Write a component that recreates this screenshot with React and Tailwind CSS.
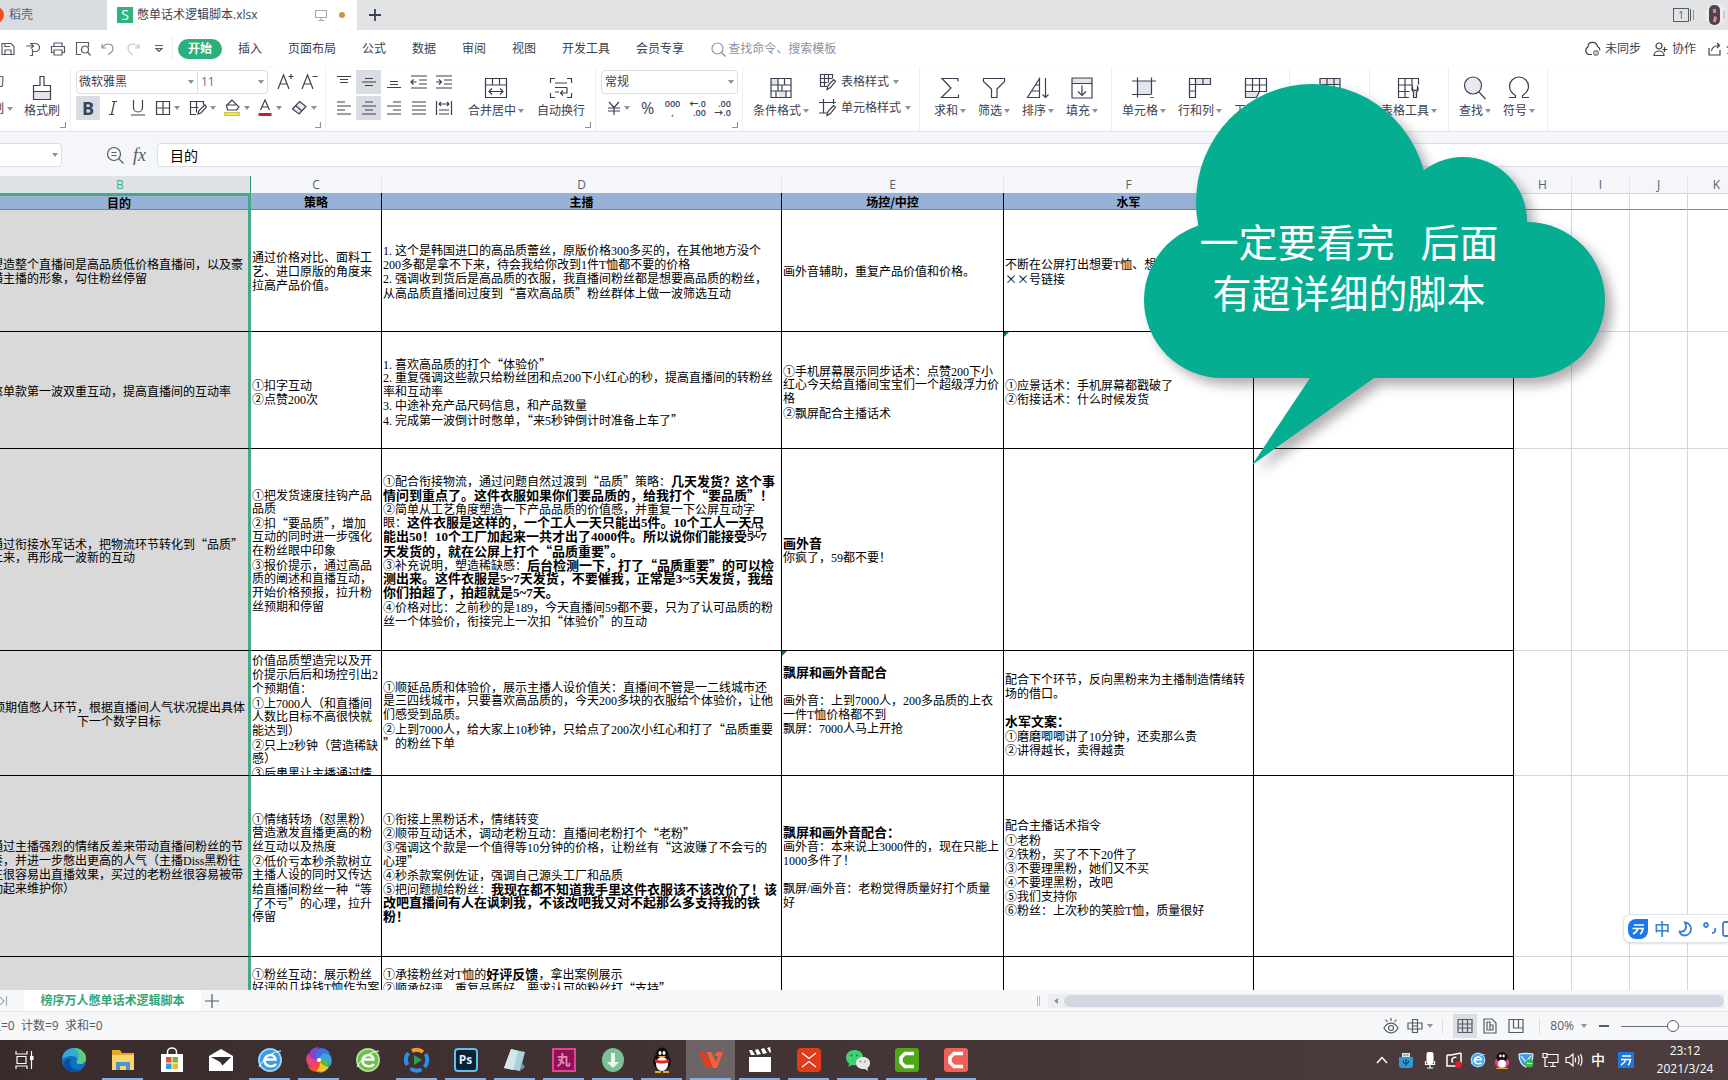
// src/App.jsx
import React from 'react';

const UI_FONT = "font-['Open_Sans','Noto_Sans_CJK_SC',sans-serif]";
const CJK_FONT = "font-['Noto_Sans_CJK_SC',sans-serif]";
const CELL_FONT = "font-['Liberation_Serif','Noto_Sans_CJK_SC',serif]";

/* ---------- small helpers ---------- */

const Svg = ({ w = 20, h, vb, className = '', children }) => (
  <svg
    width={w}
    height={h || w}
    viewBox={vb || `0 0 ${w} ${h || w}`}
    className={`shrink-0 ${className}`}
    fill="none"
    stroke="currentColor"
    strokeWidth="1.2"
    aria-hidden="true"
  >
    {children}
  </svg>
);

const Caret = () => (
  <svg width="6" height="4" viewBox="0 0 6 4" className="shrink-0 fill-[#8d929b]" aria-hidden="true">
    <path d="M0 0h6L3 4z" />
  </svg>
);

const Corner = () => (
  <Svg w={6} className="absolute right-1 bottom-[3px] text-[#8d929b]">
    <path d="M5.500 0v5.500H0" />
  </Svg>
);

// Full width quotes and circled numbers need the CJK face, digits the narrow one
const renderText = (text) =>
  text.split(/([“”①-⑥×]+)/).map((part, i) =>
    i % 2 ? <span key={i} className={CJK_FONT}>{part}</span> : part
  );

const Line = ({ text }) => (
  <div className="h-[14px] text-xs leading-[14px] whitespace-pre">
    {text.split('**').map((part, i) =>
      i % 2 ? (
        <b key={i} className="text-[13px] leading-[14px] font-bold">{renderText(part)}</b>
      ) : (
        <React.Fragment key={i}>{renderText(part)}</React.Fragment>
      )
    )}
  </div>
);

/* ---------- ribbon icons ---------- */

const icons = {
  save: <Svg w={16}><path d="M2 13.500v-11h9l3 3v8zM5 13.500V9h6v4.500M5 2.500v3h5" /></Svg>,
  exportPdf: <Svg w={16}><path d="M5 14.500h2.500v-4h3a4 4 0 0 0 0-8H5M1 5h7M6 2.500 8.500 5 6 7.500M7.500 10.500V8" /></Svg>,
  print: <Svg w={16}><path d="M4 5.500V2h8v3.500M4 11.500H1.500v-6h13v6H12M4 9h8v5H4z" /></Svg>,
  preview: <Svg w={16}><path d="M6 13.500H1.500v-12h12V6" /><circle cx="10" cy="8.500" r="3.500" /><path d="m12.500 11 3 3.500" /></Svg>,
  undo: <Svg w={16} className="text-[#8d929b]"><path d="M2 3v4h4M2.500 6.500C5 3 8 2.500 10.500 3.500c4 2 3 7.500-2.500 10" /></Svg>,
  redo: <Svg w={16} className="text-[#c5c8ce]"><path d="M14 3v4h-4M13.500 6.500C11 3 8 2.500 5.500 3.500c-4 2-3 7.500 2.500 10" /></Svg>,
  more: <Svg w={10}><path d="M1 1.500h8M2 4.500 5 7.500l3-3z" /></Svg>,
  brush: <Svg w={22} h={26}><path d="M9 1.500h4v9h6.500v6h-17v-6H9z" /><path d="M2.500 16.500h17v8h-17z" fill="#e3e4ec" /></Svg>,
  borders: <Svg w={16}><path d="M1.500 1.500h13v13h-13zM8 1.500v13M1.500 8h13" /></Svg>,
  cellStyle: <Svg w={18} h={16}><path d="M7 14.500H1.500v-13h13V5M1.500 7.500h8M7.500 1.500v11M9 14l1-3.500 6-5.500 1.500 2-5.500 6z" /></Svg>,
  fill: <Svg w={18} h={18}><path d="m9 1-5.500 5.500L4.500 11h9L16 8 9 1zM3 6h10" /><path d="M1.500 13.500h15v3h-15z" fill="#f4ea3c" stroke="#a8a23c" strokeWidth=".6" /></Svg>,
  fontColor: <Svg w={16} h={18}><path d="M3.500 11 8 1l4.500 10M5 8h6" /><path d="M1.500 14h13v3h-13z" fill="#c4202c" stroke="none" /></Svg>,
  eraser: <Svg w={18} h={16}><path d="m9.500 1.500 6.500 5-7 7.500-6.500-5z" fill="#e9eaf0" /><path d="m5.500 5.500 6.500 5.500" /></Svg>,
  alignTop: <Svg w={16}><path d="M1 2.500h14M4 5.500h8M4 8.500h8" /></Svg>,
  alignMid: <Svg w={16}><path d="M1 8h14M4 4.500h8M4 11.500h8" /></Svg>,
  alignBottom: <Svg w={16}><path d="M1 13.500h14M4 10.500h8M4 7.500h8" /></Svg>,
  outdent: <Svg w={18} h={16}><path d="M1 2h16M9 6h8M9 10h8M1 14h16M6.500 8H1M3.500 5.500 1 8l2.500 2.500" /></Svg>,
  indent: <Svg w={18} h={16}><path d="M1 2h16M9 6h8M9 10h8M1 14h16M1 8h5.500M4 5.500 6.500 8 4 10.500" /></Svg>,
  left: <Svg w={16}><path d="M1 2h8M1 6h14M1 10h8M1 14h14" /></Svg>,
  center: <Svg w={16}><path d="M4 2h8M1 6h14M4 10h8M1 14h14" /></Svg>,
  right: <Svg w={16}><path d="M7 2h8M1 6h14M7 10h8M1 14h14" /></Svg>,
  justify: <Svg w={16}><path d="M1 2h14M1 6h14M1 10h14M1 14h14" /></Svg>,
  distribute: <Svg w={18} h={16}><path d="M1.500 1v14M16.500 1v14M4 4h10M6 2 4 4l2 2M12 2l2 2-2 2M4 10h10M4 14h10" /></Svg>,
  merge: <Svg w={24}><path d="M1.500 2.500h21v19h-21zM1.500 9h21M8.500 2.500V9M15.500 2.500V9M5 15.500h14M8 12.500l-3 3 3 3M16 12.500l3 3-3 3" /></Svg>,
  wrap: <Svg w={24}><path d="M1.500 7V2.500H6M18 2.500h4.500V7M1.500 17v4.500H6M18 21.500h4.500V17M6 7h12M6 11.500h12M6 16h4M18 11.500V17h-6M14 14.500 11.500 17l2.500 2.500" /></Svg>,
  cond: <Svg w={24}><path d="M2 2.500h7.500V9H2zM9.500 15H18v6.500H9.500z" fill="#e3e4ec" stroke="none" /><path d="M2 2.500h20v19H2zM2 9h20M2 15h20M9 2.500V15M15.500 2.500V9M13 9v6M17 15v6.500M7 15v6.500" /></Svg>,
  tableStyle: <Svg w={18} h={18}><path d="M8 13.500H1.500v-12h12V5M1.500 5.500h12M1.500 9.500h7M5.500 1.500v12M9.500 1.500v8M8 16.500l1-4 5.500-6 2 1.500-5 6.500z" /></Svg>,
  boxStyle: <Svg w={18} h={18}><path d="M4.500 0v14M0 3.500h17M14.500 0v5M0 14h8M8 16.500l1-4 5.500-6 2 1.500-5 6.500z" /></Svg>,
  sum: <Svg w={24}><path d="M20 5.500v-3H4L13 12l-9.500 9.500H20.500v-3" /></Svg>,
  filter: <Svg w={24}><path d="M1.500 2.500h21v3L15 13v8.500H9.500V13l-8-7.500z" /></Svg>,
  sort: <Svg w={26} h={24}><path d="M14.500 21.500v-19L2.500 21.500zM14.500 15H7M14.500 9h-4M20.500 2v19.500M17.500 18.500l3 3 3-3" /></Svg>,
  fillDown: <Svg w={24}><path d="M2 2h20v6H2z" fill="#e3e4ec" stroke="none" /><path d="M2 2h20v20H2zM2 7.500h20M12 9.500v10M8 15.500l4 4 4-4" /></Svg>,
  cells: <Svg w={24}><path d="M5.500 5h14v13h-14z" fill="#e3e4ec" stroke="none" /><path d="M5.500 1.500v20M19.500 1.500v17M0 5h24M0 18.500h19M18.500 21.500h3" /></Svg>,
  rowscols: <Svg w={24}><path d="M7.500 2.500h15v6h-15z" fill="#e3e4ec" stroke="none" /><path d="M1.500 2.500h21v6h-21zM1.500 8.500v13h6v-19M15 2.500v6M1.500 15h6" /></Svg>,
  sheet: <Svg w={24}><path d="M1.500 15.500h14l-3 6h-11z" fill="#e3e4ec" stroke="none" /><path d="M1.500 2.500h21v13h-21zM1.500 9h21M8.500 2.500v13M15.500 2.500v13M1.500 15.500v6h11l3-6" /></Svg>,
  freeze: <Svg w={24}><path d="M2 2.500h20v6H2z" fill="#e3e4ec" stroke="none" /><path d="M2 2.500h20v19H2zM2 8.500h20M2 15h20M9 2.500v19M16 2.500v19" /></Svg>,
  tools: <Svg w={24}><path d="M12 21.500H1.500v-19h20v6M1.500 9H15M1.500 15.500h11M8 2.500v19M15 2.500v8" /><path d="M16.500 21.500V16a4 4 0 0 1-1-5.500v3l2.500 1 2.500-1v-3a4 4 0 0 1-1 5.500v5.500z" fill="#e3e4ec" /></Svg>,
  find: <Svg w={24} h={26}><circle cx="10" cy="10.500" r="8.500" fill="#e9eaf0" /><path d="m16 17 6.500 7" /></Svg>,
  omega: <Svg w={24}><path d="M2 21.500h6.500v-2C4.500 17 2.500 14 2.500 10.500a9.500 9.500 0 0 1 19 0c0 3.500-2 6.500-6 9v2H22" /></Svg>,
};

const IconButton = ({ label, icon, active, caret, className = 'w-[25px]' }) => (
  <button
    type="button"
    aria-label={label}
    className={`flex h-6 shrink-0 items-center justify-center gap-[3px] ${className} ${active ? 'bg-[#dadce3]' : ''}`}
  >
    {icon}
    {caret && <Caret />}
  </button>
);

const BigButton = ({ label, icon, caret = true, className = 'w-[44px]' }) => (
  <button type="button" className={`flex h-full shrink-0 flex-col items-center gap-[2px] pt-[7px] ${className}`}>
    <span className="flex h-[26px] items-center">{icons[icon]}</span>
    <span className="flex items-center gap-[2px] text-xs leading-4 whitespace-nowrap">
      {label}
      {caret && <Caret />}
    </span>
  </button>
);

const Group = ({ className, children }) => (
  <div className={`relative flex h-full shrink-0 border-r border-[#eeeff2] ${className}`}>{children}</div>
);

/* ---------- window header ---------- */

const TabBar = () => (
  <div className="flex h-[30px] items-stretch bg-[#e1e3e5] text-[#3b4150]">
    <button type="button" className="flex w-[107px] shrink-0 items-center gap-[5px] bg-[#d9dce0] text-xs text-[#5b606c]">
      <span className="-ml-3 h-4 w-4 shrink-0 rounded-full bg-[#f0501e]" />
      稻壳
    </button>
    <div className="flex w-[250px] shrink-0 items-center bg-white pl-[10px]">
      <span className="flex h-4 w-4 shrink-0 items-center justify-center bg-[#2fb480] text-sm leading-none text-white">S</span>
      <span className="ml-1 text-xs whitespace-nowrap">憋单话术逻辑脚本.xlsx</span>
      <Svg w={12} className="ml-auto text-[#a4a9b3]"><path d="M.500 1.500h11v7H.500zM6 8.500V11M3 11.500h6" /></Svg>
      <span className="mr-3 ml-3 h-[6px] w-[6px] rounded-full bg-[#c9983a]" />
    </div>
    <button type="button" aria-label="新建标签" className="flex w-9 items-center justify-center">
      <Svg w={12}><path d="M6 0v12M0 6h12" strokeWidth="1.800" /></Svg>
    </button>
    <div className="ml-auto flex items-center gap-[10px]">
      <span className="flex items-center gap-[1px] text-[#555b68]">
        <span className="flex h-[14px] w-4 items-center justify-center border border-[#555b68] text-[10px]">1</span>
        <span className="h-3 w-[1px] bg-[#555b68]" />
        <span className="ml-[1px] h-[10px] w-[1px] bg-[#8d929b]" />
      </span>
      <svg width="24" height="24" viewBox="0 0 24 24" aria-hidden="true">
        <circle cx="12" cy="12" r="11" fill="#eeebed" />
        <rect x="5" y="2" width="11" height="20" rx="5" fill="#55404f" />
        <path d="M9 6h3v4H9zM10 13l3 1-1 5H9z" fill="#c88f90" />
        <path d="M20 8v8" stroke="#b0a8ae" />
      </svg>
    </div>
  </div>
);

const MENUS = ['插入', '页面布局', '公式', '数据', '审阅', '视图', '开发工具', '会员专享'];

const MenuBar = () => (
  <div className="flex h-[38px] items-center bg-white text-xs text-[#3b4150]">
    <div className="flex items-center gap-[9px] text-[#555b68]">
      {[['保存', 'save'], ['输出', 'exportPdf'], ['打印', 'print'], ['打印预览', 'preview'], ['撤销', 'undo'], ['恢复', 'redo']].map(
        ([label, icon]) => (
          <button key={icon} type="button" aria-label={label}>{icons[icon]}</button>
        )
      )}
      <button type="button" aria-label="更多" className="ml-1">{icons.more}</button>
    </div>
    <div className="ml-2 h-6 w-[1px] bg-[#eeeff2]" />
    <nav className="flex items-center">
      <button type="button" className="ml-[5px] mr-[3px] h-5 w-11 rounded-full bg-[#2bb07c] font-bold text-white">开始</button>
      {MENUS.map((menu) => (
        <button key={menu} type="button" className="px-[13px] whitespace-nowrap">{menu}</button>
      ))}
    </nav>
    <label className="ml-[14px] flex items-center gap-[2px] text-[#8b93a6]">
      <Svg w={15}><circle cx="6.500" cy="6.500" r="5.500" /><path d="m10.500 10.500 4 4" /></Svg>
      <input
        type="text"
        aria-label="查找命令"
        placeholder="查找命令、搜索模板"
        className="w-40 bg-transparent outline-none placeholder:text-[#8b93a6]"
      />
    </label>
    <div className="-mr-[22px] ml-auto flex items-center gap-3">
      <button type="button" className="flex items-center gap-1">
        <Svg w={17} h={16}><path d="M8 13.500H5a4 4 0 0 1-1-7.500c0-6 8.500-6 9.500-.500 2 1 2.500 2.500 2.500 4" /><circle cx="12" cy="12" r="3" fill="#8d929b" stroke="none" /><path d="M10.500 12h3" stroke="#fff" /></Svg>
        未同步
      </button>
      <button type="button" className="flex items-center gap-1">
        <Svg w={15}><circle cx="6" cy="4" r="3" /><path d="M1 13.500c0-6 10-6 10 0zM11.500 5v5M9.500 7.500h5" /></Svg>
        协作
      </button>
      <button type="button" className="flex items-center gap-1">
        <Svg w={14}><path d="M1 6v7h11V8M3.500 9c.5-4 3-5.500 8-5.500M9 1l2.500 2.500L9 6" /></Svg>
        分享
      </button>
    </div>
  </div>
);

const Ribbon = () => (
  <div className="flex h-16 border-b border-[#dfe1e5] bg-white text-[#3b4150] shadow-sm">
    <Group className="w-[71px]">
      <div className="flex w-4 flex-col justify-between overflow-hidden pt-[6px] pb-[14px] text-xs leading-4">
        <span className="-ml-2">切</span>
        <span className="-ml-2 flex items-center gap-[3px]">制<Caret /></span>
      </div>
      <BigButton label="格式刷" icon="brush" caret={false} className="w-[52px]" />
      <Corner />
    </Group>

    <Group className="w-[255px]">
      <div className="flex flex-col gap-[2px] pt-[2px] pl-[5px]">
        <div className="flex h-6 items-center">
          <label className="relative flex h-6 w-[122px] items-center rounded-l-sm border border-[#dcdee3]">
            <select aria-label="字体" className="w-full appearance-none pl-[2px] text-xs outline-none">
              <option>微软雅黑</option>
            </select>
            <span className="pointer-events-none absolute right-[3px]"><Caret /></span>
          </label>
          <label className="relative flex h-6 w-[70px] items-center rounded-r-sm border border-l-0 border-[#dcdee3]">
            <select aria-label="字号" className="w-full appearance-none pl-[3px] text-xs text-[#6b7079] outline-none">
              <option>11</option>
            </select>
            <span className="pointer-events-none absolute right-[3px]"><Caret /></span>
          </label>
          <IconButton label="增大字号" className="ml-[5px] w-6" icon={<Svg w={17} h={18}><path d="M1 16 6.500 2 12 16M3 11h7M11.500 3.500h5M14 1v5" /></Svg>} />
          <IconButton label="减小字号" icon={<Svg w={17} h={18}><path d="M1 16 6.500 2 12 16M3 11h7M11.500 3.500h5" /></Svg>} />
        </div>
        <div className="flex h-6 items-center">
          <IconButton label="加粗" active className="w-6" icon={<span className="text-lg leading-none font-bold">B</span>} />
          <IconButton label="倾斜" icon={<Svg w={14} h={16}><path d="M6 1.500h5M3 14.500h5M8.500 1.500l-3 13" /></Svg>} />
          <IconButton label="下划线" icon={<Svg w={16} h={16}><path d="M3.500 0v7.500a4.500 4.500 0 0 0 9 0V0M1 15h14" /></Svg>} />
          <IconButton label="边框" caret className="w-[34px]" icon={icons.borders} />
          <IconButton label="单元格绘制" caret className="w-[36px]" icon={icons.cellStyle} />
          <IconButton label="填充颜色" caret className="w-[32px]" icon={icons.fill} />
          <IconButton label="字体颜色" caret className="w-[34px]" icon={icons.fontColor} />
          <IconButton label="清除" caret className="w-[34px]" icon={icons.eraser} />
        </div>
      </div>
      <Corner />
    </Group>

    <Group className="w-[270px]">
      <div className="flex w-[133px] flex-col gap-[2px] pt-[2px] pl-[5px]">
        <div className="flex">
          <IconButton label="顶端对齐" icon={icons.alignTop} />
          <IconButton label="垂直居中" active icon={icons.alignMid} />
          <IconButton label="底端对齐" icon={icons.alignBottom} />
          <IconButton label="减少缩进" icon={icons.outdent} />
          <IconButton label="增加缩进" icon={icons.indent} />
        </div>
        <div className="flex">
          <IconButton label="左对齐" icon={icons.left} />
          <IconButton label="水平居中" active icon={icons.center} />
          <IconButton label="右对齐" icon={icons.right} />
          <IconButton label="两端对齐" icon={icons.justify} />
          <IconButton label="分散对齐" icon={icons.distribute} />
        </div>
      </div>
      <BigButton label="合并居中" icon="merge" className="w-[74px]" />
      <BigButton label="自动换行" icon="wrap" caret={false} className="w-[56px]" />
      <Corner />
    </Group>

    <Group className="w-[147px]">
      <div className="flex flex-col gap-[2px] pt-[2px] pl-[5px]">
        <label className="relative flex h-6 w-[137px] items-center rounded-sm border border-[#dcdee3]">
          <select aria-label="数字格式" className="w-full appearance-none pl-[3px] text-xs outline-none">
            <option>常规</option>
          </select>
          <span className="pointer-events-none absolute right-[3px]"><Caret /></span>
        </label>
        <div className="flex h-6 items-center">
          <IconButton label="货币" caret className="w-[34px]" icon={<Svg w={14}><path d="M2 1l5 5.500L12 1M1 7h12M1 10h12M7 6.500V14" /></Svg>} />
          <IconButton label="百分比" icon={<span className="text-base leading-none">%</span>} />
          <IconButton
            label="千位分隔"
            icon={<span className="flex flex-col items-center text-[9px] leading-[9px] font-semibold"><span>000</span><span>,</span></span>}
          />
          <IconButton
            label="增加小数位"
            icon={<span className="flex flex-col items-end text-[9px] leading-[9px] font-semibold"><span>←.0</span><span>.00</span></span>}
          />
          <IconButton
            label="减少小数位"
            icon={<span className="flex flex-col items-end text-[9px] leading-[9px] font-semibold"><span>.00</span><span>→.0</span></span>}
          />
        </div>
      </div>
      <Corner />
    </Group>

    <Group className="w-[177px]">
      <BigButton label="条件格式" icon="cond" className="w-[76px]" />
      <div className="flex flex-col gap-[2px] pt-[2px] text-xs">
        <button type="button" className="flex h-6 items-center gap-1 whitespace-nowrap">
          {icons.tableStyle}表格样式<Caret />
        </button>
        <button type="button" className="flex h-6 items-center gap-1 whitespace-nowrap">
          {icons.boxStyle}单元格样式<Caret />
        </button>
      </div>
    </Group>

    <Group className="w-[192px] pl-2">
      <BigButton label="求和" icon="sum" />
      <BigButton label="筛选" icon="filter" />
      <BigButton label="排序" icon="sort" />
      <BigButton label="填充" icon="fillDown" />
    </Group>

    <Group className="w-[178px] pl-1">
      <BigButton label="单元格" icon="cells" className="w-14" />
      <BigButton label="行和列" icon="rowscols" className="w-14" />
      <BigButton label="工作表" icon="sheet" className="w-14" />
    </Group>
    <Group className="w-20 justify-center"><BigButton label="冻结窗格" icon="freeze" className="w-16" /></Group>
    <Group className="w-[79px] justify-center"><BigButton label="表格工具" icon="tools" className="w-16" /></Group>
    <Group className="w-[99px] pl-1">
      <BigButton label="查找" icon="find" />
      <BigButton label="符号" icon="omega" />
    </Group>
  </div>
);

const FormulaBar = () => (
  <div className="flex h-11 items-center bg-[#f5f6f9] pt-[2px] text-[#555b68]">
    <label className="relative -ml-1 flex h-6 w-[66px] shrink-0 items-center rounded-sm border border-[#dcdee3] bg-white">
      <input type="text" aria-label="名称框" className="w-full outline-none" />
      <span className="absolute right-[3px]"><Caret /></span>
    </label>
    <Svg w={18} className="ml-11"><circle cx="8" cy="8" r="6.500" /><path d="m13 13 4.500 4.500M5.500 6.500h5M5.500 9.500h5" /></Svg>
    <span className="ml-[9px] w-6 font-['Liberation_Serif',serif] text-lg italic">fx</span>
    <input
      type="text"
      aria-label="编辑栏"
      defaultValue="目的"
      className="h-6 min-w-0 flex-1 rounded-l-sm border border-r-0 border-[#dcdee3] bg-white pl-3 text-sm text-black outline-none"
    />
  </div>
);

/* ---------- sheet ---------- */

const COLUMNS = [
  { id: 'B', width: 'w-[261px]' },
  { id: 'C', width: 'w-[131px]' },
  { id: 'D', width: 'w-[400px]' },
  { id: 'E', width: 'w-[222px]' },
  { id: 'F', width: 'w-[250px]' },
  { id: 'G', width: 'w-[260px]' },
  { id: 'H', width: 'w-[58px]' },
  { id: 'I', width: 'w-[58px]' },
  { id: 'J', width: 'w-[58px]' },
  { id: 'K', width: 'w-[58px]' },
];

const TITLES = ['目的', '策略', '主播', '场控/中控', '水军', ''];

const ROWS = [
  {
    height: 'h-[122px]',
    cells: [
      { lines: ['塑造整个直播间是高品质低价格直播间，以及豪', '横主播的形象，勾住粉丝停留'] },
      { lines: ['通过价格对比、面料工', '艺、进口原版的角度来', '拉高产品价值。'] },
      {
        lines: [
          '1. 这个是韩国进口的高品质蕾丝，原版价格300多买的，在其他地方没个',
          '200多都是拿不下来，待会我给你改到1件T恤都不要的价格',
          '2. 强调收到货后是高品质的衣服，我直播间粉丝都是想要高品质的粉丝，',
          '从高品质直播间过度到“喜欢高品质”粉丝群体上做一波筛选互动',
        ],
      },
      { lines: ['画外音辅助，重复产品价值和价格。'] },
      { lines: ['不断在公屏打出想要T恤、想要', '××号链接'] },
      { lines: [] },
    ],
  },
  {
    height: 'h-[117px]',
    cells: [
      { lines: ['憋单款第一波双重互动，提高直播间的互动率'] },
      { lines: ['①扣字互动', '②点赞200次'] },
      {
        lines: [
          '1. 喜欢高品质的打个“体验价”',
          '2. 重复强调这些款只给粉丝团和点200下小红心的秒，提高直播间的转粉丝',
          '率和互动率',
          '3. 中途补充产品尺码信息，和产品数量',
          '4. 完成第一波倒计时憋单，“来5秒钟倒计时准备上车了”',
        ],
      },
      { lines: ['①手机屏幕展示同步话术：点赞200下小', '红心今天给直播间宝宝们一个超级浮力价', '格', '②飘屏配合主播话术'] },
      { lines: ['①应景话术：手机屏幕都戳破了', '②衔接话术：什么时候发货'], note: true },
      { lines: [] },
    ],
  },
  {
    height: 'h-[202px]',
    cells: [
      { lines: ['通过衔接水军话术，把物流环节转化到“品质”', '上来，再形成一波新的互动'] },
      {
        lines: [
          '①把发货速度挂钩产品',
          '品质',
          '②扣“要品质”，增加',
          '互动的同时进一步强化',
          '在粉丝眼中印象',
          '③报价提示，通过高品',
          '质的阐述和直播互动，',
          '开始价格预报，拉升粉',
          '丝预期和停留',
        ],
      },
      {
        lines: [
          '①配合衔接物流，通过问题自然过渡到“品质”策略：**几天发货？这个事**',
          '**情问到重点了。这件衣服如果你们要品质的，给我打个“要品质”！**',
          '②简单从工艺角度塑造一下产品品质的价值感，并重复一下公屏互动字',
          '眼：**这件衣服是这样的，一个工人一天只能出5件。10个工人一天只**',
          '**能出50！10个工厂加起来一共才出了4000件。所以说你们能接受5~7**',
          '**天发货的，就在公屏上打个“品质重要”。**',
          '③补充说明，塑造稀缺感：**后台检测一下，打了“品质重要”的可以检**',
          '**测出来。这件衣服是5~7天发货，不要催我，正常是3~5天发货，我给**',
          '**你们拍超了，拍超就是5~7天。**',
          '④价格对比：之前秒的是189，今天直播间59都不要，只为了认可品质的粉',
          '丝一个体验价，衔接完上一次扣“体验价”的互动',
        ],
      },
      { lines: ['**画外音**', '你疯了，59都不要！'] },
      { lines: [] },
      { lines: [] },
    ],
  },
  {
    height: 'h-[125px]',
    cells: [
      { lines: ['预期值憋人环节，根据直播间人气状况提出具体', '下一个数字目标'], centered: true },
      {
        clipped: true,
        lines: [
          '价值品质塑造完以及开',
          '价提示后后和场控引出2',
          '个预期值：',
          '①上7000人（和直播间',
          '人数比目标不高很快就',
          '能达到）',
          '②只上2秒钟（营造稀缺',
          '感）',
          '③后患黑让主播通过情',
        ],
      },
      {
        lines: [
          '①顺延品质和体验价，展示主播人设价值关：直播间不管是一二线城市还',
          '是三四线城市，只要喜欢高品质的，今天200多块的衣服给个体验价，让他',
          '们感受到品质。',
          '②上到7000人，给大家上10秒钟，只给点了200次小红心和打了“品质重要',
          '”的粉丝下单',
        ],
      },
      {
        note: true,
        lines: ['**飘屏和画外音配合**', '', '画外音：上到7000人，200多品质的上衣', '一件T恤价格都不到', '飘屏：7000人马上开抢', '', ''],
      },
      {
        lines: ['配合下个环节，反向黑粉来为主播制造情绪转', '场的借口。', '', '**水军文案：**', '①磨磨唧唧讲了10分钟，还卖那么贵', '②讲得越长，卖得越贵'],
      },
      { lines: [] },
    ],
  },
  {
    height: 'h-[181px]',
    cells: [
      {
        lines: [
          '通过主播强烈的情绪反差来带动直播间粉丝的节',
          '奏，并进一步憋出更高的人气（主播Diss黑粉往',
          '往很容易出直播效果，买过的老粉丝很容易被带',
          '动起来维护你）',
        ],
      },
      {
        lines: [
          '①情绪转场（怼黑粉）',
          '营造激发直播更高的粉',
          '丝互动以及热度',
          '②低价亏本秒杀款树立',
          '主播人设的同时又传达',
          '给直播间粉丝一种“等',
          '了不亏”的心理，拉升',
          '停留',
        ],
      },
      {
        lines: [
          '①衔接上黑粉话术，情绪转变',
          '②顺带互动话术，调动老粉互动：直播间老粉打个“老粉”',
          '③强调这个款是一个值得等10分钟的价格，让粉丝有“这波赚了不会亏的',
          '心理”',
          '④秒杀款案例佐证，强调自己源头工厂和品质',
          '⑤把问题抛给粉丝：**我现在都不知道我手里这件衣服该不该改价了！该**',
          '**改吧直播间有人在讽刺我，不该改吧我又对不起那么多支持我的铁**',
          '**粉！**',
        ],
      },
      { lines: ['**飘屏和画外音配合：**', '画外音：本来说上3000件的，现在只能上', '1000多件了！', '', '飘屏/画外音：老粉觉得质量好打个质量', '好'] },
      {
        lines: ['配合主播话术指令', '①老粉', '②铁粉，买了不下20件了', '③不要理黑粉，她们又不买', '④不要理黑粉，改吧', '⑤我们支持你', '⑥粉丝：上次秒的笑脸T恤，质量很好'],
      },
      { lines: [] },
    ],
  },
  {
    height: 'h-[120px]',
    top: true,
    cells: [
      { lines: [] },
      { lines: ['①粉丝互动：展示粉丝', '好评的几块钱T恤作为案'] },
      { lines: ['①承接粉丝对T恤的**好评反馈**，拿出案例展示', '②顺承好评，重复品质好，要求认可的粉丝打“支持”'] },
      { lines: [] },
      { lines: [] },
      { lines: [] },
    ],
  },
];

const Cell = ({ cell, index, top }) => (
  <td
    className={`relative border-r border-b border-b-black px-[1px] ${top ? 'pt-[10px] align-top' : 'pt-[3px] align-middle'} ${
      index === 0 ? 'border-r-[3px] border-r-[#45a987] bg-[#d9d9d9]' : 'border-r-black'
    } ${cell.centered ? 'text-center' : ''}`}
  >
    {cell.note && <span className="absolute top-0 left-0 border-t-[5px] border-r-[5px] border-t-[#1c6b3c] border-r-transparent" />}
    <div className={cell.clipped ? 'h-[121px] overflow-hidden' : ''}>
      {cell.lines.map((text, i) => <Line key={i} text={text} />)}
    </div>
  </td>
);

const Sheet = () => (
  <main className="relative min-h-0 flex-1 overflow-hidden bg-white">
    <table className={`-ml-[10px] w-full min-w-[1756px] table-fixed border-separate border-spacing-0 text-black ${CELL_FONT}`}>
      <colgroup>
        {COLUMNS.map((col) => <col key={col.id} className={col.width} />)}
      </colgroup>
      <thead className={UI_FONT}>
        <tr className="h-[17px]">
          {COLUMNS.map((col, i) => (
            <th
              key={col.id}
              className={`p-0 text-xs leading-4 font-normal ${
                i === 0
                  ? 'border-r border-[#2f9e75] bg-[#dfe2e5] text-[#3fae86]'
                  : 'border-r border-[#e6e8ec] bg-[#f5f6f9] text-[#5b606c]'
              }`}
            >
              {col.id}
            </th>
          ))}
        </tr>
      </thead>
      <tbody>
        <tr className="h-[17px]">
          {TITLES.map((title, i) => (
            <td
              key={i}
              className={`border-r border-b border-b-[#3fa37f] bg-[#97b1d7] p-0 text-center text-xs leading-[13px] font-bold ${CJK_FONT} ${
                i === 0 ? 'border-t-[3px] border-r-[3px] border-t-[#45a987] border-r-[#45a987]' : 'border-r-black'
              }`}
            >
              {title}
            </td>
          ))}
          {COLUMNS.slice(6).map((col) => (
            <td key={col.id} className="border-t border-r border-b border-t-[#d4d8dc] border-r-[#d4d8dc] border-b-[#3fa37f] p-0" />
          ))}
        </tr>
        {ROWS.map((row, r) => (
          <tr key={r} className={row.height}>
            {row.cells.map((cell, i) => <Cell key={i} cell={cell} index={i} top={row.top} />)}
            {COLUMNS.slice(6).map((col) => (
              <td key={col.id} className="border-r border-b border-[#d4d8dc] p-0" />
            ))}
          </tr>
        ))}
      </tbody>
    </table>
  </main>
);

const SheetTabs = () => (
  <div className="flex h-[22px] items-center border-b border-[#e6e8ec] bg-[#f5f7f9] text-[#555b68]">
    <button type="button" aria-label="最后一个工作表" className="w-6">
      <Svg w={8} h={10} className="text-[#a4a9b3]"><path d="m0 1 4 4-4 4M6.500 0v10" /></Svg>
    </button>
    <button type="button" className="h-full w-[177px] bg-white text-xs font-bold text-[#32a67a]">榜序万人憋单话术逻辑脚本</button>
    <button type="button" aria-label="新建工作表" className="flex w-[22px] justify-center">
      <Svg w={14}><path d="M7 0v14M0 7h14" /></Svg>
    </button>
    <div className="ml-auto flex w-[40%] items-center pr-1">
      <span className="mr-2 h-[10px] w-[3px] border-x border-[#b5b9c1]" />
      <span className="flex h-[14px] flex-1 items-center bg-[#eceef2]">
        <button type="button" aria-label="向左滚动" className="flex w-4 justify-center">
          <svg width="4" height="6" viewBox="0 0 4 6" className="fill-[#8d929b]" aria-hidden="true"><path d="M4 0v6L0 3z" /></svg>
        </button>
        <span className="h-3 flex-1 rounded-full bg-[#d4d6e2]" />
      </span>
    </div>
  </div>
);

const StatusBar = () => (
  <div className="flex h-7 items-center bg-[#f5f7f9] text-xs text-[#555b68]">
    <span className="-ml-[35px] whitespace-pre">平均值=0  计数=9  求和=0</span>
    <div className="ml-auto flex items-center">
      <button type="button" aria-label="护眼模式" className="flex w-[22px] justify-center">
        <Svg w={16} h={18}><circle cx="8" cy="11" r="2.500" /><path d="M1 11c3.500-6.500 10.500-6.500 14 0-3.500 6.500-10.500 6.500-14 0zM8 1v3M2.500 2.500l2 2.500M13.500 2.500l-2 2.500" /></Svg>
      </button>
      <button type="button" aria-label="阅读模式" className="flex w-9 items-center justify-center gap-1">
        <Svg w={16}><path d="M5.500 1.500h5v13h-5zM1 5h14v6H1zM5.500 8h5" /></Svg>
        <Caret />
      </button>
      <span className="mx-1 h-4 w-[1px] bg-[#dcdee3]" />
      <button type="button" aria-label="普通视图" className="ml-[6px] flex h-6 w-6 items-center justify-center bg-[#dbdfe2]">
        <Svg w={16}><path d="M1 1.500h14v13H1zM1 6h14M1 10h14M5.500 1.500v13M10.500 1.500v13" /></Svg>
      </button>
      <button type="button" aria-label="页面布局视图" className="flex w-[26px] justify-center">
        <Svg w={14} h={16}><path d="M1 1h8l4 4v10H1zM4 4h3v8H4zM7 7h3v5H7z" /></Svg>
      </button>
      <button type="button" aria-label="分页预览" className="flex w-[26px] justify-center">
        <Svg w={16}><path d="M1 1.500h14v13H1zM5.500 1.500V10h9.500M10.500 1.500V10" /></Svg>
      </button>
      <span className="mx-[10px] h-4 w-[1px] bg-[#dcdee3]" />
      <button type="button" className="flex items-center gap-[7px]">80%<Caret /></button>
      <button type="button" aria-label="缩小" className="ml-3 h-[2px] w-[10px] bg-[#555b68]" />
      <input
        type="range"
        aria-label="缩放"
        defaultValue="48"
        className="ml-3 h-[1px] w-[107px] appearance-none bg-linear-to-r from-[#6b7079] from-50% to-[#c9ccd2] to-50% outline-none [&::-webkit-slider-thumb]:h-3 [&::-webkit-slider-thumb]:w-3 [&::-webkit-slider-thumb]:appearance-none [&::-webkit-slider-thumb]:rounded-full [&::-webkit-slider-thumb]:border [&::-webkit-slider-thumb]:border-[#555b68] [&::-webkit-slider-thumb]:bg-white"
      />
    </div>
  </div>
);

/* ---------- taskbar ---------- */

const BrowserE = ({ from, to, size = 26 }) => (
  <svg width={size} height={size} viewBox="0 0 26 26" fill="none" aria-hidden="true">
    <circle cx="13" cy="13" r="12" fill={from} />
    <circle cx="13" cy="13" r="11" stroke={to} strokeWidth="1.500" />
    <path d="M19 17C16.500 20.500 7.500 20 7.500 13.500S18 6 18.500 12.500H8" stroke="#fff" strokeWidth="2.500" />
    <path d="M2 20C6 12 16 4 24 4" stroke="#fff" strokeWidth="1" />
  </svg>
);

const APPS = [
  { name: '任务视图', icon: <Svg w={20} h={18} className="text-white"><path d="M1 0v3h11V0M1 18v-3h11v3M2 5.500h9v7H2zM16.500 0v18" /><path d="M15 5h3.500v4H15z" fill="#fff" stroke="none" /></Svg> },
  {
    name: 'Edge',
    icon: (
      <svg width="26" height="26" viewBox="0 0 26 26" aria-hidden="true">
        <circle cx="13" cy="13" r="12" fill="#1270c4" />
        <path d="M1 12C2 3 9 1 13 1c7 0 12 5 12 10 0 4-3 6-6 6-3 0-4-1.500-3-3 1-2-1-5-5-5-5 0-8 2-10 3z" fill="#35a9d0" />
        <path d="M13 1c7 0 12 5 12 10 0 4-3 6-6 6-3 0-4-1.500-3-3C20 9 17 3 13 1z" fill="#58cf7c" />
        <path d="M10 12c-3 5 1 12 9 11-5 4-16 2-16-6 0-4 4-6 7-5z" fill="#0c4f9e" />
      </svg>
    ),
  },
  {
    name: '文件资源管理器',
    open: true,
    icon: (
      <svg width="24" height="22" viewBox="0 0 24 22" aria-hidden="true">
        <path d="M1 1h8l2 3h12v17H1z" fill="#e3a92f" />
        <path d="M1 6h22v15H1z" fill="#fbd568" />
        <path d="M5 21v-8h14v8h-4v-4H9v4z" fill="#4a96d2" />
      </svg>
    ),
  },
  {
    name: 'Microsoft Store',
    icon: (
      <svg width="24" height="26" viewBox="0 0 24 26" aria-hidden="true">
        <path d="M7.500 8V5a4.500 4 0 0 1 9 0v3" stroke="#fff" strokeWidth="1.500" fill="none" />
        <path d="M1 7h22v18H1z" fill="#fff" />
        <path d="M6 10h5.500v5.500H6z" fill="#e8532b" /><path d="M12.500 10H18v5.500h-5.500z" fill="#7cb82f" />
        <path d="M6 16.500h5.500V22H6z" fill="#2b9fe0" /><path d="M12.500 16.500H18V22h-5.500z" fill="#f5b91f" />
      </svg>
    ),
  },
  { name: '邮件', icon: <svg width="26" height="22" viewBox="0 0 26 22" aria-hidden="true"><path d="M1 7 13 0l12 7v15H1z" fill="#fff" /><path d="M3 8h20l-8.500 8.500L12 13z" fill="#3a2c2d" /></svg> },
  { name: 'IE', open: true, icon: <BrowserE from="#3d9be0" to="#a9d8f5" /> },
  {
    name: '360',
    open: true,
    icon: (
      <svg width="26" height="26" viewBox="0 0 26 26" aria-hidden="true">
        {['#8c3fd0', '#3f6fe0', '#36a4e0', '#55b948', '#ef4f2a', '#e2447b'].map((fill, i) => (
          <path key={fill} d="M13 13C8 10 9 3 14 1c6 0 9 3 10 6-5-1-9 2-11 6z" fill={fill} transform={`rotate(${i * 60 - 60} 13 13)`} />
        ))}
        <path d="M13 13c2 5 0 9-3 11 6 2 10 0 13-4-4 0-8-3-10-7z" fill="#f3c52c" />
        <circle cx="13" cy="13" r="2" fill="#fff" />
      </svg>
    ),
  },
  { name: '360浏览器', icon: <BrowserE from="#6cc04a" to="#b6e39c" /> },
  {
    name: '播放器',
    open: true,
    icon: (
      <svg width="26" height="26" viewBox="0 0 26 26" fill="none" strokeWidth="4" aria-hidden="true">
        <path d="M8 4a10.500 10.500 0 0 1 11 1" stroke="#f29a2e" />
        <path d="M21.500 7a10.500 10.500 0 0 1-1 13M17.500 22.500a10.500 10.500 0 0 1-11-1M3.500 18a10.500 10.500 0 0 1 1-12" stroke="#2c8fe6" />
        <path d="M10 8v10l8-5z" fill="#2f9e54" />
      </svg>
    ),
  },
  { name: 'Photoshop', open: true, icon: <span className="flex h-6 w-6 items-center justify-center rounded-sm border-2 border-[#5fc0ea] bg-[#0a2233] text-xs font-bold text-[#d5f0fb]">Ps</span> },
  { name: '便笺', open: true, icon: <svg width="24" height="24" viewBox="0 0 24 24" aria-hidden="true"><path d="m8 1 14 3-5 19L1 20z" fill="#a9d0dd" /><path d="m8 1 7 2-5 19-9-2z" fill="#d3e8ee" /><path d="M17 23l2-8 3 4z" fill="#6c97a8" /></svg> },
  { name: '丸', open: true, icon: <span className="flex h-6 w-6 items-center justify-center border-2 border-[#e0449a] bg-[#8c1450] text-sm font-bold text-[#e884b8]">丸</span> },
  { name: '下载', open: true, icon: <svg width="24" height="24" viewBox="0 0 24 24" aria-hidden="true"><ellipse cx="12" cy="12" rx="11" ry="12" fill="#7cc095" /><path d="M10 5h4v9h4l-6 6-6-6h4z" fill="#e8f6ec" /></svg> },
  {
    name: 'QQ',
    open: true,
    icon: (
      <svg width="20" height="26" viewBox="0 0 20 26" aria-hidden="true">
        <ellipse cx="10" cy="15" rx="9" ry="9" fill="#111" /><ellipse cx="10" cy="8" rx="6.500" ry="7.500" fill="#111" />
        <ellipse cx="10" cy="17" rx="6" ry="7" fill="#fff" />
        <ellipse cx="8" cy="6" rx="1.500" ry="2" fill="#fff" /><ellipse cx="12" cy="6" rx="1.500" ry="2" fill="#fff" />
        <path d="M3 12c4 2 10 2 14 0v3c-4 2-10 2-14 0z" fill="#e0222a" />
        <path d="M6 9c2 2 6 2 8 0zM3 24h6v2H3zM11 24h6v2h-6z" fill="#f2a81c" />
      </svg>
    ),
  },
  {
    name: 'WPS',
    open: true,
    focused: true,
    icon: (
      <svg width="26" height="18" viewBox="0 0 26 18" aria-hidden="true">
        <path d="M1 1h6l4 9 2-4 3 5-3 6H8z" fill="#e23c25" />
        <path d="M9 1h4l5 10 2-6h-4l3-4h6l-6 16h-4z" fill="#f2603c" />
      </svg>
    ),
  },
  { name: '视频编辑', open: true, icon: <svg width="24" height="26" viewBox="0 0 24 26" fill="#fff" aria-hidden="true"><path d="M1 10h22v15H1zM1 3l3 0 3 5H3zM7 3l3-1 3 5-4 1zM13 2l3-1 3 5-4 1zM19 1l3-1 1 5-1 1z" /></svg> },
  { name: 'XMind', open: true, icon: <span className="flex h-6 w-6 items-center justify-center rounded-sm bg-[#e03c1e] text-white"><Svg w={16}><path d="m1 1 7 5.500L15 1M1 15l7-5.500 7 5.500" /></Svg></span> },
  {
    name: '微信',
    open: true,
    icon: (
      <svg width="26" height="22" viewBox="0 0 26 22" aria-hidden="true">
        <path d="M9.500 1C4.500 1 1 4.500 1 8.500c0 2.500 1 4.500 3 6L3.500 18l3.500-2c8 1.500 12-3 11-8.500C17.500 3.500 14 1 9.500 1z" fill="#45cf74" />
        <circle cx="6.500" cy="6.500" r="1" fill="#1d7a3c" /><circle cx="12" cy="6.500" r="1" fill="#1d7a3c" />
        <path d="M18 8c-4 0-7 2.500-7 6s3 6 7 6l2 0 3 2-.5-3c1.500-1 2.500-3 2.500-5 0-3.500-3-6-7-6z" fill="#e6e8e8" />
        <circle cx="15.500" cy="12.500" r="1" fill="#8c8f90" /><circle cx="20" cy="12.500" r="1" fill="#8c8f90" />
      </svg>
    ),
  },
  { name: 'Camtasia', open: true, icon: <span className="flex h-6 w-6 items-center justify-center rounded-[3px] bg-[#4fa618] text-white"><Svg w={18}><path d="M16 2.500H7L3 6.500v5l4 4h9" strokeWidth="3.500" /></Svg></span> },
  { name: 'Camtasia 录制', open: true, icon: <span className="flex h-6 w-6 items-center justify-center rounded-[3px] bg-[#f0605a] text-white"><Svg w={18}><path d="M16 2.500H7L3 6.500v5l4 4h9" strokeWidth="3.500" /></Svg></span> },
];

const TRAY = [
  { name: '显示隐藏的图标', icon: <Svg w={12} h={8}><path d="m1 7 5-5.500L11 7" strokeWidth="1.500" /></Svg> },
  { name: 'U盘', icon: <Svg w={14} h={16}><path d="M3 1h8v4H3z" fill="#d8eaf4" stroke="none" /><path d="M4.500 3h2M7.500 3h2" stroke="#2a5c78" /><path d="M0 5h14v8a3 3 0 0 1-3 3H3a3 3 0 0 1-3-3z" fill="#2f9ad6" stroke="none" /><path d="M7 7v7M4.500 8.500v2L7 12l2.500-1.500v-2" stroke="#0f4668" /></Svg> },
  { name: '麦克风', icon: <Svg w={12} h={18}><rect x="2.500" y="1" width="7" height="12" rx="2" fill="#fff" stroke="none" /><path d="M1.500 10v3.500h9V10M6 13v4M3 17h6" /></Svg> },
  { name: '同步', icon: <Svg w={18} h={16}><path d="M2 3h4M16 1v10M16 1 6 3M2 3v11h9M11.500 5.500c-4-1-6 3-3.500 5" strokeWidth="1.500" /><circle cx="13.500" cy="12.500" r="3.500" fill="#e02030" stroke="none" /></Svg> },
  { name: '浏览器', icon: <BrowserE from="#4aa8e4" to="#b9e0f6" size={16} /> },
  { name: 'QQ', icon: <svg width="16" height="17" viewBox="0 0 20 26" preserveAspectRatio="none" aria-hidden="true"><ellipse cx="10" cy="16" rx="9" ry="8" fill="#e8448c" /><ellipse cx="10" cy="8" rx="7" ry="8" fill="#1d0d18" /><ellipse cx="10" cy="18" rx="5" ry="6" fill="#fff" /><ellipse cx="8" cy="6" rx="1.500" ry="2" fill="#fff" /><ellipse cx="12" cy="6" rx="1.500" ry="2" fill="#fff" /><path d="M3 24h14v2H3z" fill="#f2a81c" /></svg> },
  { name: '安全', icon: <Svg w={16}><path d="M1 2c5-1 9-1 14 0 0 6-2 11-7 13C3 13 1 8 1 2z" fill="#3a9de0" stroke="#d9effb" /><path d="m3 4 5 6 5-6" stroke="#d9effb" /><circle cx="11.500" cy="11.500" r="4" fill="#34b54a" stroke="none" /><path d="M9 11.500h5" /></Svg> },
  { name: '网络', icon: <Svg w={17} h={16}><path d="M5 2.500h11v8H6M8 14.500h6M11 11v3M1 1.500h4v4H1zM3 5.500v9h3" /></Svg> },
  { name: '音量', icon: <Svg w={18} h={16}><path d="M1 5.500h3L8 2v12l-4-3.500H1zM10.500 5.500v5M13 3.500c1.500 3 1.500 6 0 9M15.500 2c2 4 2 8 0 12" /></Svg> },
];

const Taskbar = () => (
  <footer className="flex h-10 items-stretch bg-linear-to-r from-[#3a2c2d] to-[#4d3d3e] text-white">
    <div className="flex">
      {APPS.map((app) => (
        <button
          key={app.name}
          type="button"
          aria-label={app.name}
          className={`relative flex w-[49px] items-center justify-center ${app.focused ? 'bg-[#6e6465]' : ''}`}
        >
          {app.icon}
          {app.open && <span className="absolute inset-x-1 bottom-0 h-[2px] bg-[#86aede]" />}
        </button>
      ))}
    </div>
    <div className="ml-auto flex items-center">
      {TRAY.map((item) => (
        <button key={item.name} type="button" aria-label={item.name} className="flex w-6 items-center justify-center">
          {item.icon}
        </button>
      ))}
      <button type="button" className="w-6 text-sm font-medium">中</button>
      <button type="button" aria-label="万能输入法" className="mx-2 flex h-4 w-4 items-center justify-center bg-[#1f78e0]">
        <Svg w={12}><path d="M2 2h9M1 5.500h9.500C10 8 9.500 10 8 11M6 5.500C5 8 3.500 9.500 1 11" strokeWidth="1.500" /></Svg>
      </button>
      <div className="w-[86px] text-center text-xs leading-[18px]">
        <div>23:12</div>
        <div>2021/3/24</div>
      </div>
    </div>
  </footer>
);

/* ---------- overlays ---------- */

const Callout = () => (
  <div className="absolute top-[70px] left-[1130px] h-[410px] w-[500px]">
    <svg width="500" height="410" viewBox="1130 70 500 410" className="absolute inset-0 overflow-visible fill-[#05ae91] drop-shadow-[7px_7px_6px_rgba(60,50,60,0.4)]" aria-hidden="true">
      <ellipse cx="1312" cy="202" rx="116" ry="118" />
      <circle cx="1463" cy="221" r="64" />
      <circle cx="1222" cy="300" r="78" />
      <circle cx="1527" cy="300" r="78" />
      <path d="M1222 230h305v148h-153L1252 465l58-87h-88z" />
    </svg>
    <p className={`relative pt-[145px] pr-[62px] text-center text-[39px] leading-[51px] font-normal whitespace-pre text-white ${CJK_FONT}`}>
      {'一定要看完   后面\n有超详细的脚本'}
    </p>
  </div>
);

const ImeBar = () => (
  <div className="absolute top-[914px] right-0 flex h-[29px] w-[105px] items-center overflow-hidden rounded-l-lg border border-r-0 border-[#e0e4ea] bg-white text-[#3c7fd0] shadow-sm">
    <span className="ml-1 flex h-5 w-5 shrink-0 items-center justify-center rounded-lg rounded-tr-none bg-[#1b78e8] text-white">
      <Svg w={14}><path d="M3 3h10M1.500 6.500H12C11.500 9 11 11 9 12M7 6.500C6 9 4.500 11 2 12" strokeWidth="1.600" /></Svg>
    </span>
    <button type="button" className="w-7 shrink-0 text-base leading-none font-medium">中</button>
    <Svg w={16} className="ml-[2px]"><path d="M7 1.500c8 1 8 12 0 13-3 0-5-2-5.500-4 6 1 8-4 5.500-9z" strokeWidth="1.800" /></Svg>
    <Svg w={16} className="ml-2"><circle cx="4" cy="4" r="2" strokeWidth="1.800" /><path d="M13 7c1 4-1 5-3 5" strokeWidth="1.800" /></Svg>
    <Svg w={16} className="ml-1"><rect x="1" y="1" width="14" height="14" rx="2" strokeWidth="1.800" /></Svg>
  </div>
);

const Cursor = () => (
  <svg width="16" height="16" viewBox="0 0 18 18" className="absolute top-[522px] left-[747px] fill-white stroke-black" aria-hidden="true">
    <path d="M6.500 1.500h4v5h5v4h-5v5h-4v-5h-5v-4h5z" />
  </svg>
);

export default function App() {
  return (
    <div lang="zh-CN" className={`relative flex h-screen flex-col overflow-hidden bg-white ${UI_FONT}`}>
      <TabBar />
      <MenuBar />
      <Ribbon />
      <FormulaBar />
      <Sheet />
      <SheetTabs />
      <StatusBar />
      <Taskbar />
      <Cursor />
      <ImeBar />
      <Callout />
    </div>
  );
}
